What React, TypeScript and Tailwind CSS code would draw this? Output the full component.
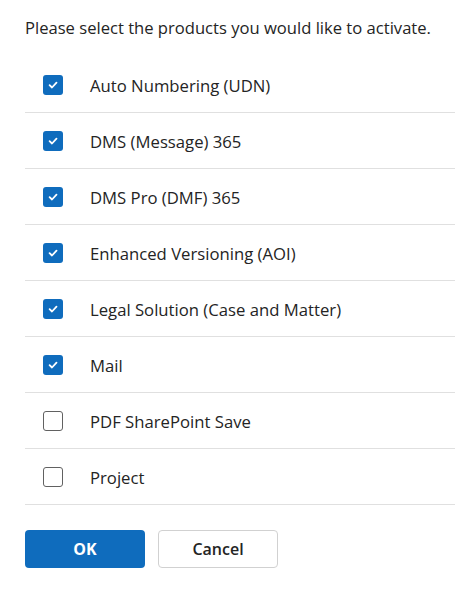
import React, { useState } from "react";

const items = [
  { label: "Auto Numbering (UDN)", checked: true },
  { label: "DMS (Message) 365", checked: true },
  { label: "DMS Pro (DMF) 365", checked: true },
  { label: "Enhanced Versioning (AOI)", checked: true },
  { label: "Legal Solution (Case and Matter)", checked: true },
  { label: "Mail", checked: true },
  { label: "PDF SharePoint Save", checked: false },
  { label: "Project", checked: false },
];

export default function App() {
  const [state, setState] = useState(items.map((i) => i.checked));
  return (
    <div
      className="w-[455px] h-[589px] bg-white pl-[25px] text-[#242424]"
      style={{ fontFamily: '"Open Sans", "Noto Sans", sans-serif' }}
    >
      <p className="pt-[17px] text-[16.6px] leading-[22px]">
        Please select the products you would like to activate.
      </p>
      <ul className="mt-[18px]">
        {items.map((it, i) => (
          <li
            key={it.label}
            className="h-[56px] border-b border-[#e0e0e0] flex items-center pl-[18px] gap-[27px] cursor-pointer"
            onClick={() => setState((s) => s.map((v, j) => (j === i ? !v : v)))}
          >
            {state[i] ? (
              <span className="w-[20px] h-[20px] rounded-[3px] bg-[#0f6cbd] flex items-center justify-center">
                <svg width="12" height="12" viewBox="0 0 12 12" fill="none">
                  <path d="M2.6 6.2 L5 8.5 L9.5 3.7" stroke="white" strokeWidth="1.8" strokeLinecap="round" strokeLinejoin="round" />
                </svg>
              </span>
            ) : (
              <span className="w-[20px] h-[20px] rounded-[3px] border border-[#616161] bg-white" />
            )}
            <span className="text-[16.7px] leading-[22px] translate-y-[1px]">{it.label}</span>
          </li>
        ))}
      </ul>
      <div className="flex gap-[13px] mt-[25px]">
        <button className="w-[120px] h-[38px] rounded-[4px] bg-[#0f6cbd] text-white text-[16px] font-bold">
          OK
        </button>
        <button className="w-[120px] h-[38px] rounded-[4px] bg-white border border-[#d1d1d1] text-[#242424] text-[16px] font-semibold">
          Cancel
        </button>
      </div>
    </div>
  );
}
